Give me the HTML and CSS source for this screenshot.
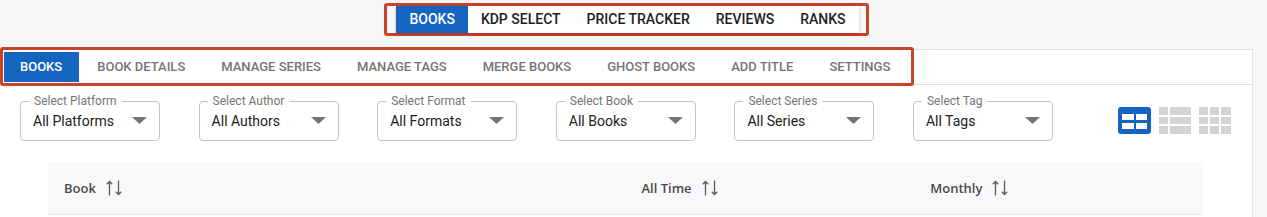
FILE: index.html
```html
<!DOCTYPE html>
<html lang="en">
<head>
<meta charset="utf-8">
<title>Books</title>
<link rel="stylesheet" href="styles.css">
</head>
<body>
<div class="page">
  <header class="topbar">
    <div class="annot annot-top">
      <nav class="mainnav">
        <a class="mainnav-item is-active">BOOKS</a>
        <a class="mainnav-item">KDP SELECT</a>
        <a class="mainnav-item">PRICE TRACKER</a>
        <a class="mainnav-item">REVIEWS</a>
        <a class="mainnav-item">RANKS</a>
      </nav>
    </div>
  </header>

  <section class="card">
    <div class="tabs-row">
      <div class="annot annot-tabs">
        <nav class="tabs">
          <a class="tab is-active">BOOKS</a>
          <a class="tab">BOOK DETAILS</a>
          <a class="tab">MANAGE SERIES</a>
          <a class="tab">MANAGE TAGS</a>
          <a class="tab">MERGE BOOKS</a>
          <a class="tab">GHOST BOOKS</a>
          <a class="tab">ADD TITLE</a>
          <a class="tab">SETTINGS</a>
        </nav>
      </div>
    </div>

    <div class="filters">
      <fieldset class="select">
        <legend class="select-label">Select Platform</legend>
        <div class="select-value"><span>All Platforms</span><svg class="caret" width="15" height="7" viewBox="0 0 15 7"><polygon points="0,0 15,0 7.5,7"/></svg></div>
      </fieldset>
      <fieldset class="select">
        <legend class="select-label">Select Author</legend>
        <div class="select-value"><span>All Authors</span><svg class="caret" width="15" height="7" viewBox="0 0 15 7"><polygon points="0,0 15,0 7.5,7"/></svg></div>
      </fieldset>
      <fieldset class="select">
        <legend class="select-label">Select Format</legend>
        <div class="select-value"><span>All Formats</span><svg class="caret" width="15" height="7" viewBox="0 0 15 7"><polygon points="0,0 15,0 7.5,7"/></svg></div>
      </fieldset>
      <fieldset class="select">
        <legend class="select-label">Select Book</legend>
        <div class="select-value"><span>All Books</span><svg class="caret" width="15" height="7" viewBox="0 0 15 7"><polygon points="0,0 15,0 7.5,7"/></svg></div>
      </fieldset>
      <fieldset class="select">
        <legend class="select-label">Select Series</legend>
        <div class="select-value"><span>All Series</span><svg class="caret" width="15" height="7" viewBox="0 0 15 7"><polygon points="0,0 15,0 7.5,7"/></svg></div>
      </fieldset>
      <fieldset class="select">
        <legend class="select-label">Select Tag</legend>
        <div class="select-value"><span>All Tags</span><svg class="caret" width="15" height="7" viewBox="0 0 15 7"><polygon points="0,0 15,0 7.5,7"/></svg></div>
      </fieldset>

      <div class="views">
        <svg class="view view-active" width="33" height="27" viewBox="0 0 33 27">
          <rect width="33" height="27" rx="3" fill="#1565c0"/>
          <rect x="4" y="7" width="12" height="6" fill="#fff"/>
          <rect x="18" y="7" width="11" height="6" fill="#fff"/>
          <rect x="4" y="16" width="12" height="6" fill="#fff"/>
          <rect x="18" y="16" width="11" height="6" fill="#fff"/>
        </svg>
        <svg class="view" width="32" height="27" viewBox="0 0 32 27">
          <rect x="0" y="0" width="9" height="8"/><rect x="11" y="0" width="21" height="8"/>
          <rect x="0" y="10" width="9" height="7"/><rect x="11" y="10" width="21" height="7"/>
          <rect x="0" y="19" width="9" height="8"/><rect x="11" y="19" width="21" height="8"/>
        </svg>
        <svg class="view" width="32" height="27" viewBox="0 0 32 27">
          <rect x="0" y="0" width="9" height="8"/><rect x="11" y="0" width="9" height="8"/><rect x="22" y="0" width="10" height="8"/>
          <rect x="0" y="10" width="9" height="7"/><rect x="11" y="10" width="9" height="7"/><rect x="22" y="10" width="10" height="7"/>
          <rect x="0" y="19" width="9" height="8"/><rect x="11" y="19" width="9" height="8"/><rect x="22" y="19" width="10" height="8"/>
        </svg>
      </div>
    </div>

    <div class="table">
      <div class="thead">
        <div class="th">Book <svg class="sort" width="16" height="16" viewBox="0 0 16 16"><path d="M3.5 15.5V1.5M0.8 4.2L3.5 1.5l2.7 2.7M12.5 0.5v14M9.8 11.8l2.7 2.7 2.7-2.7"/></svg></div>
        <div class="th">All Time <svg class="sort" width="16" height="16" viewBox="0 0 16 16"><path d="M3.5 15.5V1.5M0.8 4.2L3.5 1.5l2.7 2.7M12.5 0.5v14M9.8 11.8l2.7 2.7 2.7-2.7"/></svg></div>
        <div class="th">Monthly <svg class="sort" width="16" height="16" viewBox="0 0 16 16"><path d="M3.5 15.5V1.5M0.8 4.2L3.5 1.5l2.7 2.7M12.5 0.5v14M9.8 11.8l2.7 2.7 2.7-2.7"/></svg></div>
      </div>
    </div>
  </section>
</div>
</body>
</html>
```

FILE: styles.css
```css
* { box-sizing: border-box; }

html, body {
  margin: 0;
  background: #f7f7f7;
  font-family: Roboto, "Liberation Sans", Arial, sans-serif;
}

.page {
  width: 1253px;
}

/* annotation boxes */
.annot {
  border: 3px solid #c9432b;
  border-radius: 3px;
}

/* top navigation */
.topbar {
  height: 49px;
  padding-top: 3px;
  display: flex;
  justify-content: center;
}

.annot-top {
  height: 33px;
  padding: 0 7px 0 9px;
}

.mainnav {
  display: flex;
  height: 27px;
  background: #fff;
  box-shadow: 0 1px 3px rgba(0, 0, 0, 0.22);
}

.mainnav-item {
  display: block;
  padding: 0 13px;
  line-height: 27px;
  font-size: 14px;
  font-weight: 500;
  color: #212121;
  white-space: nowrap;
}

.mainnav-item.is-active {
  background: #1565c0;
  color: #fff;
}

/* card */
.card {
  background: #fff;
  border-top: 1px solid #e2e2e2;
  border-right: 1px solid #e2e2e2;
  min-height: 168px;
}

.tabs-row {
  height: 35px;
  border-bottom: 1px solid #e0e0e0;
  display: flex;
  align-items: flex-start;
}

.annot-tabs {
  margin-top: -3px;
  height: 39px;
  padding: 2px 3px 0 1px;
}

.tabs {
  display: flex;
  height: 30px;
}

.tab {
  display: block;
  padding: 0 18px;
  line-height: 30px;
  font-size: 13px;
  font-weight: 500;
  color: #757575;
  white-space: nowrap;
}

.tab.is-active {
  background: #1565c0;
  color: #fff;
  padding: 0 17px 0 16px;
}

/* filters */
.filters {
  margin-top: 9px;
  padding: 0 21px 0 20px;
  display: flex;
  align-items: flex-start;
  gap: 38.6px;
}

.select {
  margin: 0;
  width: 140px;
  min-width: 0;
  padding: 3px 12px 9px 12px;
  border: 1px solid #c4c4c4;
  border-radius: 4px;
}

.select-label {
  margin-left: -4px;
  padding: 0 5px;
  font-size: 12px;
  line-height: 14px;
  color: #757575;
  white-space: nowrap;
}

.select-value {
  display: flex;
  align-items: center;
  justify-content: space-between;
  height: 20px;
  font-size: 14px;
  line-height: 20px;
  color: #212121;
  white-space: nowrap;
}

.caret {
  fill: #757575;
  flex: none;
  margin-top: -1px;
}

.views {
  margin-left: auto;
  padding-top: 13px;
  display: flex;
  gap: 8px;
}

.view {
  display: block;
  fill: #d4d4d4;
}

/* table */
.table {
  margin: 21px 49px 0 48px;
}

.thead {
  display: grid;
  grid-template-columns: 2fr 1fr 1fr;
  align-items: center;
  height: 53px;
  background: #f8f9fa;
  border-bottom: 1px solid #e6e6e6;
}

.th {
  display: flex;
  align-items: center;
  gap: 10px;
  padding-left: 16px;
  font-family: "Open Sans", "Liberation Sans", Arial, sans-serif;
  font-size: 13px;
  font-weight: 600;
  color: #4a4a4a;
}

.sort {
  display: block;
  fill: none;
  stroke: #5a5a5a;
  stroke-width: 1.3;
}
```
